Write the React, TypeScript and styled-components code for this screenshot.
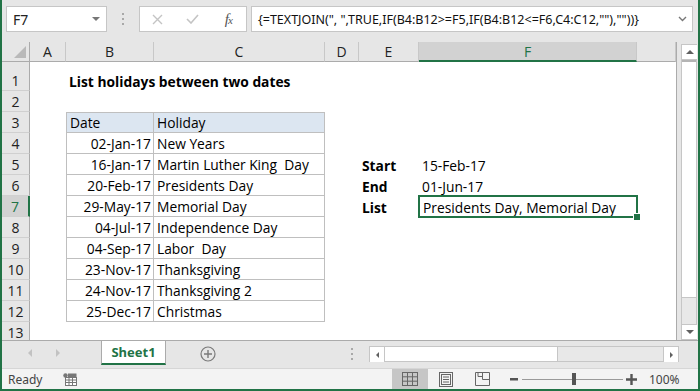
import React from 'react';
import styled, { createGlobalStyle, css } from 'styled-components';

const GREEN = '#217346';
const cellFont = `"Open Sans", "Liberation Sans", sans-serif`;
const uiFont = `"Noto Sans", "Open Sans", sans-serif`;

const GlobalStyle = createGlobalStyle`
  html, body {
    margin: 0;
    padding: 0;
    background: #fff;
  }
  * {
    box-sizing: border-box;
  }
`;

const Window = styled.div`
  width: 700px;
  height: 391px;
  display: flex;
  flex-direction: column;
  background: #e6e6e6;
  border-left: 2px solid ${GREEN};
  border-right: 2px solid ${GREEN};
  border-bottom: 2px solid ${GREEN};
  overflow: hidden;
  font-family: ${uiFont};
`;

/* ---------- formula bar ---------- */

const FormulaBar = styled.div`
  height: 42px;
  flex: none;
  display: flex;
  align-items: flex-start;
  padding: 6px 5px 0 4px;
`;

const NameBox = styled.div`
  width: 101px;
  height: 26px;
  background: #fff;
  border: 1px solid #c6c6c6;
  display: flex;
  align-items: center;
  justify-content: space-between;
  padding: 0 6px;
  font-size: 14px;
  color: #222;
`;

const DropTriangle = styled.span`
  width: 0;
  height: 0;
  border-left: 4px solid transparent;
  border-right: 4px solid transparent;
  border-top: 4px solid #777;
`;

const Grip = styled.div<{ $width: number }>`
  width: ${(p) => p.$width}px;
  height: 26px;
  flex: none;
  display: flex;
  flex-direction: column;
  align-items: center;
  justify-content: center;
  gap: 3px;
`;

const Dot = styled.span`
  display: block;
  width: 2px;
  height: 2px;
  background: #a8a8a8;
`;

const FxBox = styled.div`
  width: 108px;
  height: 26px;
  flex: none;
  background: #fff;
  border: 1px solid #c6c6c6;
  display: grid;
  grid-template-columns: repeat(3, 1fr);
  align-items: center;
  justify-items: center;
`;

const FxLabel = styled.span`
  font-family: 'Liberation Serif', serif;
  font-style: italic;
  font-size: 15px;
  color: #555;
  letter-spacing: -1px;

  small {
    font-size: 11px;
  }
`;

const FormulaInput = styled.div`
  flex: 1;
  height: 26px;
  margin-left: 4px;
  background: #fff;
  border: 1px solid #c6c6c6;
  display: flex;
  align-items: center;
  justify-content: space-between;
  padding: 0 5px 0 6px;
  font-size: 12.5px;
  color: #111;
  white-space: pre;
`;

/* ---------- sheet ---------- */

const SheetBody = styled.div`
  height: 298px;
  flex: none;
  display: flex;
`;

const GridPane = styled.div`
  width: 675px;
  flex: none;
  display: grid;
  grid-template-columns: 28px 36px 88px 171px 34px 60px 218px 1fr;
  grid-template-rows: 20px 29px repeat(12, 21px);
  background: #fff;
  border-right: 1px solid #ababab;
  overflow: hidden;
`;

const CornerCell = styled.div`
  background: #e6e6e6;
  border-right: 1px solid #ababab;
  border-bottom: 1px solid #ababab;
  display: flex;
  align-items: flex-end;
  justify-content: flex-end;
  padding: 0 3px 3px 0;
`;

const ColHead = styled.div<{ $selected?: boolean }>`
  background: ${(p) => (p.$selected ? '#d2d2d2' : '#e6e6e6')};
  border-right: 1px solid #c8c8c8;
  border-bottom: ${(p) => (p.$selected ? `2px solid ${GREEN}` : '1px solid #ababab')};
  display: flex;
  align-items: center;
  justify-content: center;
  font-family: ${cellFont};
  font-size: 14px;
  color: ${(p) => (p.$selected ? GREEN : '#222')};
`;

const RowHead = styled.div<{ $selected?: boolean }>`
  background: ${(p) => (p.$selected ? '#d2d2d2' : '#e6e6e6')};
  border-right: ${(p) => (p.$selected ? `2px solid ${GREEN}` : '1px solid #ababab')};
  border-bottom: 1px solid #d0d0d0;
  display: flex;
  align-items: flex-end;
  justify-content: center;
  font-family: ${cellFont};
  font-size: 14px;
  line-height: 19px;
  color: ${(p) => (p.$selected ? GREEN : '#222')};
`;

const tableLine = '1px solid #bfbfbf';

const Cell = styled.div<{
  $align?: 'left' | 'right';
  $bold?: boolean;
  $fill?: string;
  $table?: boolean;
  $top?: boolean;
  $left?: boolean;
  $active?: boolean;
}>`
  position: relative;
  display: flex;
  align-items: flex-end;
  justify-content: ${(p) => (p.$align === 'right' ? 'flex-end' : 'flex-start')};
  padding: 0 2px 0 3px;
  font-family: ${cellFont};
  font-size: 13.8px;
  line-height: 18px;
  font-weight: ${(p) => (p.$bold ? 700 : 400)};
  color: #000;
  white-space: pre;
  background: ${(p) => p.$fill || 'transparent'};
  ${(p) =>
    p.$table &&
    css`
      border-right: ${tableLine};
      border-bottom: ${tableLine};
    `}
  ${(p) => p.$top && css`border-top: ${tableLine};`}
  ${(p) => p.$left && css`border-left: ${tableLine};`}
  ${(p) =>
    p.$active &&
    css`
      outline: 2px solid ${GREEN};
      outline-offset: -1px;
      padding-left: 4px;
      z-index: 1;

      &::after {
        content: '';
        position: absolute;
        right: -4px;
        bottom: -4px;
        width: 6px;
        height: 6px;
        background: ${GREEN};
        border: 1px solid #fff;
      }
    `}
`;

const VScroll = styled.div`
  width: 16px;
  flex: none;
  margin: 2px 0 0 4px;
  display: flex;
  flex-direction: column;
  border: 1px solid #c6c6c6;
  background: #fff;
`;

const ScrollButton = styled.div<{ $divider?: 'top' | 'bottom' | 'left' | 'right' }>`
  flex: none;
  width: 15px;
  height: 15px;
  display: flex;
  align-items: center;
  justify-content: center;
  background: #fff;
  ${(p) => p.$divider && css`border-${p.$divider}: 1px solid #c6c6c6;`}
`;

const VThumb = styled.div`
  height: 238px;
  flex: none;
  border-top: 2px solid #b4b4b4;
  border-bottom: 1px solid #c6c6c6;
  background: #fff;
`;

const Track = styled.div`
  flex: 1;
  background: #e8e8e8;
`;

const Arrow = styled.span<{ $dir: 'up' | 'down' | 'left' | 'right'; $color?: string; $size?: number }>`
  width: 0;
  height: 0;
  ${(p) => {
    const s = p.$size ?? 4;
    const c = p.$color ?? '#606060';
    if (p.$dir === 'up')
      return css`border-left: ${s}px solid transparent; border-right: ${s}px solid transparent; border-bottom: ${s}px solid ${c};`;
    if (p.$dir === 'down')
      return css`border-left: ${s}px solid transparent; border-right: ${s}px solid transparent; border-top: ${s}px solid ${c};`;
    if (p.$dir === 'left')
      return css`border-top: ${s}px solid transparent; border-bottom: ${s}px solid transparent; border-right: ${s}px solid ${c};`;
    return css`border-top: ${s}px solid transparent; border-bottom: ${s}px solid transparent; border-left: ${s}px solid ${c};`;
  }}
`;

/* ---------- tabs ---------- */

const TabBar = styled.div`
  height: 28px;
  flex: none;
  display: flex;
  align-items: flex-start;
  border-top: 1px solid #ababab;
  background: #e6e6e6;
`;

const TabNav = styled.div`
  width: 99px;
  height: 24px;
  flex: none;
  display: flex;
  align-items: center;
  gap: 24px;
  padding-left: 26px;
`;

const SheetTab = styled.div`
  width: 65px;
  height: 24px;
  flex: none;
  background: #fff;
  border-left: 1px solid #ababab;
  border-right: 1px solid #ababab;
  border-bottom: 2px solid ${GREEN};
  display: flex;
  align-items: center;
  justify-content: center;
  font-size: 13px;
  font-weight: 700;
  color: ${GREEN};
`;

const AddSheet = styled.div`
  margin: 5px 0 0 34px;
  width: 16px;
  height: 16px;
  display: flex;
`;

const HScrollArea = styled.div`
  margin-left: auto;
  display: flex;
  align-items: center;
  height: 26px;
  padding-right: 19px;
`;

const HScroll = styled.div`
  width: 310px;
  height: 16px;
  margin-left: 12px;
  display: flex;
  border: 1px solid #c6c6c6;
  background: #fff;
`;

const HThumb = styled.div`
  width: 173px;
  flex: none;
  border-right: 1px solid #c6c6c6;
  background: #fff;
`;

/* ---------- status bar ---------- */

const StatusBar = styled.div`
  flex: 1;
  display: flex;
  align-items: center;
  background: #f3f3f3;
  border-top: 1px solid #d6d6d6;
  padding-left: 6px;
  font-size: 12px;
  color: #444;
`;

const MacroIcon = styled.span`
  display: flex;
  margin-left: 21px;
`;

const StatusRight = styled.div`
  margin-left: auto;
  height: 100%;
  display: flex;
  align-items: center;
  padding-right: 17px;
`;

const ViewButton = styled.div<{ $active?: boolean }>`
  width: 36px;
  height: 100%;
  display: flex;
  align-items: center;
  justify-content: center;
  background: ${(p) => (p.$active ? '#c6c6c6' : 'transparent')};
`;

const ZoomSign = styled.div<{ $gap?: number }>`
  width: 12px;
  display: flex;
  align-items: center;
  justify-content: center;
  margin: 0 2px 0 ${(p) => p.$gap ?? 2}px;
`;

const Slider = styled.div`
  position: relative;
  width: 101px;
  height: 12px;
  display: flex;
  align-items: center;

  &::before {
    content: '';
    flex: 1;
    height: 1px;
    background: #9a9a9a;
  }
`;

const SliderThumb = styled.span`
  position: absolute;
  left: 50px;
  top: 0;
  width: 4px;
  height: 12px;
  background: #555;
`;

const ZoomText = styled.span`
  margin-left: 10px;
  width: 32px;
`;

/* ---------- data ---------- */

interface SheetRow {
  n: number;
  kind?: 'title' | 'head' | 'data';
  b?: string;
  c?: string;
  e?: string;
  f?: string;
}

const rows: SheetRow[] = [
  { n: 1, kind: 'title', b: 'List holidays between two dates' },
  { n: 2 },
  { n: 3, kind: 'head', b: 'Date', c: 'Holiday' },
  { n: 4, kind: 'data', b: '02-Jan-17', c: 'New Years' },
  { n: 5, kind: 'data', b: '16-Jan-17', c: 'Martin Luther King  Day', e: 'Start', f: '15-Feb-17' },
  { n: 6, kind: 'data', b: '20-Feb-17', c: 'Presidents Day', e: 'End', f: '01-Jun-17' },
  { n: 7, kind: 'data', b: '29-May-17', c: 'Memorial Day', e: 'List', f: 'Presidents Day, Memorial Day' },
  { n: 8, kind: 'data', b: '04-Jul-17', c: 'Independence Day' },
  { n: 9, kind: 'data', b: '04-Sep-17', c: 'Labor  Day' },
  { n: 10, kind: 'data', b: '23-Nov-17', c: 'Thanksgiving' },
  { n: 11, kind: 'data', b: '24-Nov-17', c: 'Thanksgiving 2' },
  { n: 12, kind: 'data', b: '25-Dec-17', c: 'Christmas' },
  { n: 13 },
];

const columns = ['A', 'B', 'C', 'D', 'E', 'F', ''];
const ACTIVE_ROW = 7;
const HEAD_FILL = '#dce6f1';
const FORMULA = '{=TEXTJOIN(", ",TRUE,IF(B4:B12>=F5,IF(B4:B12<=F6,C4:C12,""),""))}';

const SheetRowCells: React.FC<{ row: SheetRow }> = ({ row }) => {
  const isHead = row.kind === 'head';
  const isTable = isHead || row.kind === 'data';
  return (
    <>
      <RowHead $selected={row.n === ACTIVE_ROW}>{row.n}</RowHead>
      <Cell />
      <Cell
        $bold={row.kind === 'title'}
        $align={row.kind === 'data' ? 'right' : 'left'}
        $table={isTable}
        $left={isTable}
        $top={isHead}
        $fill={isHead ? HEAD_FILL : undefined}
      >
        {row.b}
      </Cell>
      <Cell $table={isTable} $top={isHead} $fill={isHead ? HEAD_FILL : undefined}>
        {row.c}
      </Cell>
      <Cell />
      <Cell $bold>{row.e}</Cell>
      <Cell $active={row.n === ACTIVE_ROW}>{row.f}</Cell>
      <Cell />
    </>
  );
};

const App: React.FC = () => {
  return (
    <>
      <GlobalStyle />
      <Window>
        <FormulaBar>
          <NameBox>
            F7
            <DropTriangle />
          </NameBox>
          <Grip $width={32}>
            <Dot />
            <Dot />
            <Dot />
          </Grip>
          <FxBox>
            <svg width="11" height="11" viewBox="0 0 11 11">
              <path d="M1 1 L10 10 M10 1 L1 10" stroke="#c4c4c4" strokeWidth="1.4" fill="none" />
            </svg>
            <svg width="13" height="10" viewBox="0 0 13 10">
              <path d="M1 5 L5 9 L12 1" stroke="#c4c4c4" strokeWidth="1.6" fill="none" />
            </svg>
            <FxLabel>
              f<small>x</small>
            </FxLabel>
          </FxBox>
          <FormulaInput>
            {FORMULA}
            <svg width="9" height="6" viewBox="0 0 9 6">
              <path d="M1 1 L4.5 4.5 L8 1" stroke="#777" strokeWidth="1.4" fill="none" />
            </svg>
          </FormulaInput>
        </FormulaBar>

        <SheetBody>
          <GridPane>
            <CornerCell>
              <svg width="12" height="12" viewBox="0 0 12 12">
                <polygon points="12,0 12,12 0,12" fill="#b9b9b9" />
              </svg>
            </CornerCell>
            {columns.map((c, i) => (
              <ColHead key={i} $selected={c === 'F'}>
                {c}
              </ColHead>
            ))}
            {rows.map((r) => (
              <SheetRowCells key={r.n} row={r} />
            ))}
          </GridPane>
          <VScroll>
            <ScrollButton $divider="bottom">
              <Arrow $dir="up" />
            </ScrollButton>
            <VThumb />
            <Track />
            <ScrollButton $divider="top">
              <Arrow $dir="down" />
            </ScrollButton>
          </VScroll>
        </SheetBody>

        <TabBar>
          <TabNav>
            <Arrow $dir="left" $color="#c2c2c2" />
            <Arrow $dir="right" $color="#c2c2c2" />
          </TabNav>
          <SheetTab>Sheet1</SheetTab>
          <AddSheet>
            <svg width="16" height="16" viewBox="0 0 16 16">
              <circle cx="8" cy="8" r="7" stroke="#7a7a7a" strokeWidth="1.2" fill="none" />
              <path d="M8 4 V12 M4 8 H12" stroke="#7a7a7a" strokeWidth="1.4" />
            </svg>
          </AddSheet>
          <HScrollArea>
            <Grip $width={10}>
              <Dot />
              <Dot />
              <Dot />
            </Grip>
            <HScroll>
              <ScrollButton $divider="right">
                <Arrow $dir="left" $size={3} />
              </ScrollButton>
              <HThumb />
              <Track />
              <ScrollButton $divider="left">
                <Arrow $dir="right" $size={3} />
              </ScrollButton>
            </HScroll>
          </HScrollArea>
        </TabBar>

        <StatusBar>
          Ready
          <MacroIcon>
            <svg width="14" height="13" viewBox="0 0 14 13">
              <circle cx="2.5" cy="2.5" r="2.2" fill="#777" />
              <rect x="2.5" y="4.5" width="11" height="8" fill="#fff" stroke="#777" />
              <path d="M6 4.5 V12.5 M9.5 4.5 V12.5 M2.5 7 H13.5 M2.5 9.5 H13.5" stroke="#777" strokeWidth="1" />
              <rect x="5" y="0.5" width="8.5" height="4" fill="#777" />
            </svg>
          </MacroIcon>
          <StatusRight>
            <ViewButton $active>
              <svg width="16" height="14" viewBox="0 0 16 14">
                <rect x="0.5" y="0.5" width="15" height="13" fill="none" stroke="#666" />
                <path d="M5.5 0.5 V13.5 M10.5 0.5 V13.5 M0.5 4.8 H15.5 M0.5 9.2 H15.5" stroke="#666" />
              </svg>
            </ViewButton>
            <ViewButton>
              <svg width="14" height="15" viewBox="0 0 14 15">
                <rect x="0.5" y="0.5" width="13" height="14" fill="none" stroke="#666" />
                <rect x="2.5" y="2.5" width="9" height="10" fill="none" stroke="#666" />
                <path d="M4 5 H10 M4 7.5 H10 M4 10 H10" stroke="#666" />
              </svg>
            </ViewButton>
            <ViewButton>
              <svg width="15" height="14" viewBox="0 0 15 14">
                <path d="M0.5 0.5 H14.5 V13.5 H0.5 Z" fill="none" stroke="#666" />
                <path d="M7.5 0.5 V7.5 H14.5 M3 0.5 V4.5 H7.5" fill="none" stroke="#666" />
              </svg>
            </ViewButton>
            <ZoomSign $gap={8}>
              <svg width="8" height="3" viewBox="0 0 8 3">
                <rect width="8" height="2.5" fill="#555" />
              </svg>
            </ZoomSign>
            <Slider>
              <SliderThumb />
            </Slider>
            <ZoomSign>
              <svg width="11" height="11" viewBox="0 0 11 11">
                <path d="M5.5 0 V11 M0 5.5 H11" stroke="#555" strokeWidth="2.4" />
              </svg>
            </ZoomSign>
            <ZoomText>100%</ZoomText>
          </StatusRight>
        </StatusBar>
      </Window>
    </>
  );
};

export default App;
